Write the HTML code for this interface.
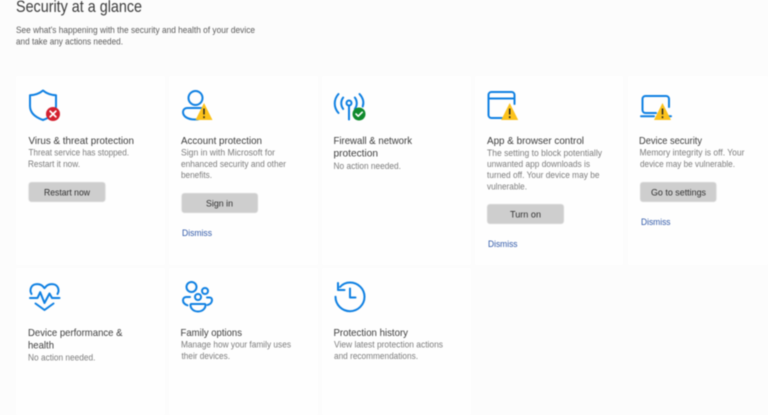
<!DOCTYPE html>
<html lang="en"><head><meta charset="utf-8"><title>Security at a glance</title>
<style>
html,body{margin:0;padding:0;width:768px;height:415px;overflow:hidden;background:#fcfcfc}
svg{display:block;position:absolute;left:0;top:0;filter:blur(.5px)}
text{font-family:"Liberation Sans",sans-serif}
.t{font-size:10.5px;fill:#3c3c3c}
.d{font-size:9px;fill:#7c7c7c}
.b{font-size:9.5px;fill:#303030}
.l{font-size:9px;fill:#2f58a8}
.c{fill:#fefefe}
.btn{fill:#cecece;stroke:#ececec;stroke-width:.8}
.i{fill:none;stroke:#0f80e2;stroke-width:2;stroke-linecap:round;stroke-linejoin:round}
.w{fill:#fcc21b}
</style></head><body>
<svg width="768" height="415" viewBox="0 0 768 415" xmlns="http://www.w3.org/2000/svg">
<rect width="768" height="415" fill="#fcfcfc"/>
<rect class="c" x="16" y="76" width="149" height="189"/><rect class="c" x="169" y="76" width="149" height="189"/><rect class="c" x="322" y="76" width="149" height="189"/><rect class="c" x="475" y="76" width="148" height="189"/><rect class="c" x="628" y="76" width="140" height="189"/>
<rect class="c" x="16" y="268" width="149" height="147"/><rect class="c" x="169" y="268" width="149" height="147"/><rect class="c" x="322" y="268" width="149" height="147"/>

<text x="16" y="12" font-size="16.500" fill="#3c3c3c" textLength="126" lengthAdjust="spacingAndGlyphs">Security at a glance</text>
<text x="16" y="33" font-size="9" fill="#5c5c5c" textLength="239" lengthAdjust="spacingAndGlyphs">See what's happening with the security and health of your device</text>
<text x="16" y="44.500" font-size="9" fill="#5c5c5c" textLength="107" lengthAdjust="spacingAndGlyphs">and take any actions needed.</text>

<!-- Virus -->
<path class="i" d="M43 90.500c3.500 3 8 4.500 13 4.800v10.700c0 6.500-4.500 11-13 14-8.500-3-13-7.500-13-14V95.300c5-.3 9.500-1.800 13-4.800z"/>
<circle cx="53" cy="114" r="7" fill="#d3202f"/><path d="M50.200 111.200l5.600 5.600M55.800 111.200l-5.600 5.600" stroke="#fff" stroke-width="1.800" stroke-linecap="round"/>
<text class="t" x="28.500" y="144" textLength="105.500" lengthAdjust="spacingAndGlyphs">Virus &amp; threat protection</text>
<text class="d" x="28.500" y="155.500" textLength="100.500" lengthAdjust="spacingAndGlyphs">Threat service has stopped.</text>
<text class="d" x="28" y="167" textLength="52" lengthAdjust="spacingAndGlyphs">Restart it now.</text>
<rect class="btn" x="28.500" y="182" width="77" height="20" rx="3"/>
<text class="b" x="44" y="195.500" textLength="46" lengthAdjust="spacingAndGlyphs">Restart now</text>

<!-- Account -->
<circle class="i" cx="195.500" cy="98" r="7"/>
<path class="i" d="M203 108h-16a4 4 0 0 0-4 4c0 4 4 7.500 12 7.500 2 0 3-.2 4-.4"/>
<path class="w" d="M204 103l8.500 17h-17z"/><path d="M204 108.500v6M204 116.300v1.800" stroke="#222" stroke-width="1.500"/>
<text class="t" x="181" y="144" textLength="81" lengthAdjust="spacingAndGlyphs">Account protection</text>
<text class="d" x="181" y="155.500" textLength="94" lengthAdjust="spacingAndGlyphs">Sign in with Microsoft for</text>
<text class="d" x="181" y="167" textLength="105" lengthAdjust="spacingAndGlyphs">enhanced security and other</text>
<text class="d" x="181" y="178" textLength="31" lengthAdjust="spacingAndGlyphs">benefits.</text>
<rect class="btn" x="181.500" y="193" width="76.500" height="20" rx="3"/>
<text class="b" x="206" y="206.500" textLength="27" lengthAdjust="spacingAndGlyphs">Sign in</text>
<text class="l" x="182" y="236" textLength="30" lengthAdjust="spacingAndGlyphs">Dismiss</text>

<!-- Firewall -->
<circle class="i" cx="349" cy="103" r="2.500"/><path class="i" d="M349 106v13.500"/>
<path class="i" d="M343.200 97.500c-2.600 3.500-2.600 8 0 11.500M354.800 97.500c2.600 3.500 2.600 8 0 11.500M338.500 94c-5 5.500-5 13.500 0 19M359.500 94c3.800 4.200 4.600 8.500 3.200 12.500"/>
<circle cx="359" cy="114" r="6.500" fill="#0f8a2c"/><path d="M356 114l2.200 2.200 4-4" fill="none" stroke="#fff" stroke-width="1.600" stroke-linecap="round" stroke-linejoin="round"/>
<text class="t" x="333.500" y="144" textLength="78.500" lengthAdjust="spacingAndGlyphs">Firewall &amp; network</text>
<text class="t" x="333.500" y="156.500" textLength="44.500" lengthAdjust="spacingAndGlyphs">protection</text>
<text class="d" x="333.500" y="169" textLength="67.500" lengthAdjust="spacingAndGlyphs">No action needed.</text>

<!-- App -->
<path class="i" d="M502 118h-10.500a3 3 0 0 1-3-3V95a3 3 0 0 1 3-3h20a3 3 0 0 1 3 3v9M488.500 98.500h25.500"/>
<path class="w" d="M509.700 103l8.500 17h-17z"/><path d="M509.700 108.500v6M509.700 116.300v1.800" stroke="#222" stroke-width="1.500"/>
<text class="t" x="487" y="144" textLength="97" lengthAdjust="spacingAndGlyphs">App &amp; browser control</text>
<text class="d" x="487" y="156" textLength="115" lengthAdjust="spacingAndGlyphs">The setting to block potentially</text>
<text class="d" x="487" y="167" textLength="103" lengthAdjust="spacingAndGlyphs">unwanted app downloads is</text>
<text class="d" x="487" y="178" textLength="112.500" lengthAdjust="spacingAndGlyphs">turned off. Your device may be</text>
<text class="d" x="487" y="189.500" textLength="40" lengthAdjust="spacingAndGlyphs">vulnerable.</text>
<rect class="btn" x="487" y="204" width="77" height="20" rx="3"/>
<text class="b" x="510" y="217.500" textLength="31" lengthAdjust="spacingAndGlyphs">Turn on</text>
<text class="l" x="488" y="247" textLength="29.500" lengthAdjust="spacingAndGlyphs">Dismiss</text>

<!-- Device -->
<path class="i" d="M656 113h-10.500a3 3 0 0 1-3-3V99a3 3 0 0 1 3-3h20.500a3 3 0 0 1 3 3v8M641 116.300h13M668 116.300h3"/>
<path class="w" d="M662.500 103l8.500 17h-17z"/><path d="M662.500 108.500v6M662.500 116.300v1.800" stroke="#222" stroke-width="1.500"/>
<text class="t" x="639" y="144" textLength="63" lengthAdjust="spacingAndGlyphs">Device security</text>
<text class="d" x="639.500" y="155.500" textLength="105" lengthAdjust="spacingAndGlyphs">Memory integrity is off. Your</text>
<text class="d" x="640" y="167" textLength="95" lengthAdjust="spacingAndGlyphs">device may be vulnerable.</text>
<rect class="btn" x="640" y="182" width="76.500" height="20" rx="3"/>
<text class="b" x="651" y="195.500" textLength="55" lengthAdjust="spacingAndGlyphs">Go to settings</text>
<text class="l" x="641" y="225" textLength="29.500" lengthAdjust="spacingAndGlyphs">Dismiss</text>

<!-- Health -->
<path class="i" d="M31.500 294c-2.300-4-.5-9 4.300-9.800 3.500-.5 6.700 1 8.700 4 2-3 5.200-4.500 8.700-4 4.800.8 6.600 5.800 4.300 9.800"/>
<path class="i" d="M30 298h7.500l2.700-5.800 4.300 10.800 5-9.500 2.500 4.500h7.500M35.500 303.500l9 6.500 9-6.500"/>
<text class="t" x="28" y="336" textLength="94.500" lengthAdjust="spacingAndGlyphs">Device performance &amp;</text>
<text class="t" x="28" y="348.500" textLength="26" lengthAdjust="spacingAndGlyphs">health</text>
<text class="d" x="28" y="360.500" textLength="67.500" lengthAdjust="spacingAndGlyphs">No action needed.</text>

<!-- Family -->
<circle class="i" cx="191.500" cy="287" r="5"/><circle class="i" cx="205" cy="291" r="3"/><circle class="i" cx="198" cy="297" r="3"/>
<path class="i" d="M190 297h-3.500c-2 0-3.500 1.300-3.500 3.300 0 2.500 1.800 4.200 4.500 5M207 297.500h2.500c1.500 0 2.500 1 2.500 2.500 0 2.500-1.800 4.500-4.500 5"/>
<path class="i" d="M191.500 304h13c.8 0 1 .5 1 1 0 3.500-3 6.500-7.500 6.500s-7.500-3-7.500-6.500c0-.5.300-1 1-1z"/>
<text class="t" x="180.500" y="336" textLength="61.500" lengthAdjust="spacingAndGlyphs">Family options</text>
<text class="d" x="181" y="347.500" textLength="110" lengthAdjust="spacingAndGlyphs">Manage how your family uses</text>
<text class="d" x="181.500" y="359" textLength="48.500" lengthAdjust="spacingAndGlyphs">their devices.</text>

<!-- History -->
<path class="i" d="M340 287c2.700-3 6-4.500 10-4.500 8 0 14.500 6.400 14.500 14.300S358 311.200 350 311.200s-14.500-6.400-14.500-14.400"/>
<path class="i" d="M338 283v7h6.500M350 288.500v9h5.500"/>
<text class="t" x="333.500" y="336" textLength="74.500" lengthAdjust="spacingAndGlyphs">Protection history</text>
<text class="d" x="334" y="347.500" textLength="109" lengthAdjust="spacingAndGlyphs">View latest protection actions</text>
<text class="d" x="334" y="359" textLength="84" lengthAdjust="spacingAndGlyphs">and recommendations.</text>
</svg>
</body></html>
